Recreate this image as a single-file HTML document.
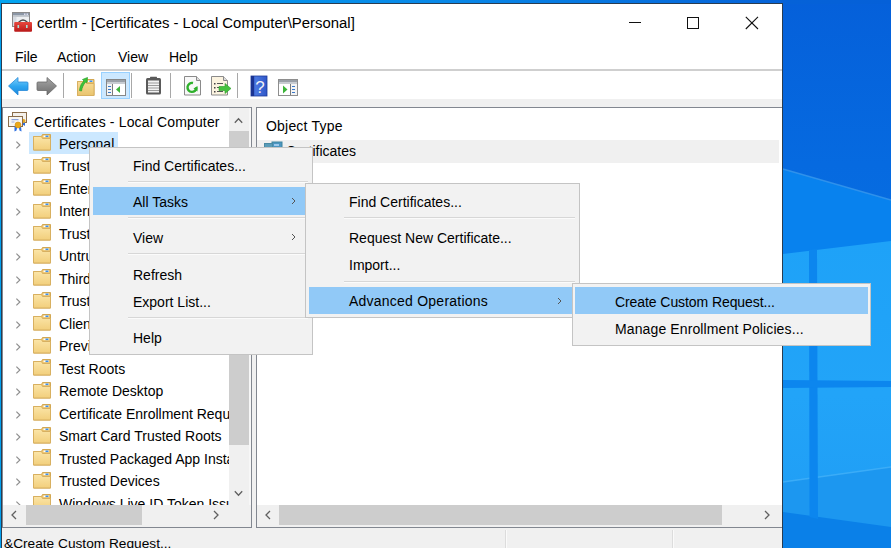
<!DOCTYPE html>
<html><head><meta charset="utf-8">
<style>
html,body{margin:0;padding:0}
body{width:891px;height:548px;overflow:hidden;position:relative;background:#0a6cd8;font-family:"Liberation Sans",sans-serif;}
.a{position:absolute}
.t{position:absolute;font-size:14px;line-height:16px;white-space:nowrap;color:#000}
.win{position:absolute;left:1px;top:3px;width:780px;height:560px;border:1px solid #2a3c50;background:#fff;overflow:hidden}
.menu{position:absolute;background:#f2f2f2;border:1px solid #c4c4c4;}
.hl{position:absolute;background:#91c9f7}
.sep{position:absolute;height:1px;background:#d7d7d7;box-shadow:0 1px 0 #fbfbfb}
.chev{position:absolute}
</style></head><body>
<!-- desktop -->
<svg class="a" style="left:0;top:0" width="891" height="548" viewBox="0 0 891 548">
  <defs>
    <linearGradient id="topg" x1="0" y1="0" x2="1" y2="0">
      <stop offset="0" stop-color="#03a4f0"/>
      <stop offset="0.5" stop-color="#0888e8"/>
      <stop offset="0.88" stop-color="#0562d8"/>
      <stop offset="1" stop-color="#0560d8"/>
    </linearGradient>
    <linearGradient id="rg" x1="0" y1="0" x2="0" y2="1">
      <stop offset="0" stop-color="#0560da"/>
      <stop offset="0.3" stop-color="#066ae0"/>
      <stop offset="1" stop-color="#0a7ae6"/>
    </linearGradient>
    <linearGradient id="pg" x1="0" y1="0" x2="0" y2="1">
      <stop offset="0" stop-color="#1ea2f8"/>
      <stop offset="0.5" stop-color="#22a4f8"/>
      <stop offset="1" stop-color="#1f9cf4"/>
    </linearGradient>
  </defs>
  <rect x="0" y="0" width="891" height="548" fill="url(#rg)"/>
  <rect x="0" y="0" width="891" height="4" fill="url(#topg)"/>
  <rect x="0" y="0" width="1" height="548" fill="#04a0ee"/>
  <polygon points="783,169 891,200 891,548 783,548" fill="#0882ee"/>
  <line x1="783" y1="169" x2="891" y2="200" stroke="#3a98ec" stroke-width="1.5" opacity="0.8"/>
  <polygon points="783,254 891,241 891,548 783,548" fill="url(#pg)"/>
  <polygon points="783,482 891,467 891,548 783,548" fill="#1c97f0"/>
  <line x1="783" y1="482" x2="891" y2="467" stroke="#48b4fa" stroke-width="1.5" opacity="0.7"/>
  <polygon points="783,512 891,527 891,548 783,548" fill="#0a80e8"/>
  <polygon points="809,250 817,249 818,519 809.5,517" fill="#0c86ee"/>
  <polygon points="783,380 891,381 891,387 783,388" fill="#0c86ee"/>
</svg>

<div class="win"></div>
<div class="a" style="left:0;top:0;width:782px;height:548px;overflow:hidden">

<!-- title bar -->
<svg class="a" style="left:12px;top:12px" width="21" height="21" viewBox="0 0 21 21">
  <defs><linearGradient id="tb" x1="0" y1="0" x2="0" y2="1"><stop offset="0" stop-color="#e8483e"/><stop offset="1" stop-color="#b81818"/></linearGradient></defs>
  <rect x="0.5" y="0.5" width="17" height="14" fill="#eef0f2" stroke="#8a8a8a"/>
  <rect x="1" y="1" width="16" height="2.5" fill="#8c97a6"/>
  <rect x="12" y="1.5" width="1.5" height="1.5" fill="#dde"/><rect x="14.5" y="1.5" width="1.5" height="1.5" fill="#dde"/>
  <rect x="1" y="4" width="16" height="1" fill="#c4c8ce"/>
  <rect x="1" y="5" width="3.5" height="9" fill="#d6dbe2"/>
  <path d="M6.5,10.5 Q11,5.5 15.5,10.5" fill="none" stroke="#4a4a4a" stroke-width="1.4"/>
  <rect x="2.2" y="10" width="17.8" height="9.8" rx="1" fill="url(#tb)"/>
  <rect x="5.5" y="13" width="1.6" height="3" fill="#a8e0d8"/>
  <rect x="14" y="13" width="1.6" height="3" fill="#a8e0d8"/>
</svg>
<div class="t" style="left:37px;top:15px;font-size:14.9px">certlm - [Certificates - Local Computer\Personal]</div>
<!-- caption buttons -->
<div class="a" style="left:629px;top:22px;width:12px;height:1px;background:#111"></div>
<div class="a" style="left:687px;top:17px;width:10px;height:10px;border:1px solid #111"></div>
<svg class="a" style="left:745px;top:16px" width="14" height="14" viewBox="0 0 14 14"><path d="M0.8 0.8 L13 13 M13 0.8 L0.8 13" stroke="#111" stroke-width="1.1"/></svg>

<!-- menu bar -->
<div class="t" style="left:15px;top:49px">File</div>
<div class="t" style="left:57px;top:49px">Action</div>
<div class="t" style="left:118px;top:49px">View</div>
<div class="t" style="left:169px;top:49px">Help</div>
<div class="a" style="left:2px;top:69px;width:780px;height:2px;background:#cfcfcf"></div>

<!-- toolbar -->
<div class="a" style="left:101px;top:72px;width:27px;height:25px;background:#cce8ff;border:1px solid #99d1ff"></div>
<svg class="a" style="left:0;top:70px" width="310" height="30" viewBox="0 70 310 30">
  <defs>
    <linearGradient id="bl" x1="0" y1="0" x2="0" y2="1"><stop offset="0" stop-color="#7fd0fa"/><stop offset="0.5" stop-color="#2fa6f0"/><stop offset="1" stop-color="#1a86dc"/></linearGradient>
    <linearGradient id="gr" x1="0" y1="0" x2="0" y2="1"><stop offset="0" stop-color="#a8a8a8"/><stop offset="0.5" stop-color="#8a8a8a"/><stop offset="1" stop-color="#6e6e6e"/></linearGradient>
    <linearGradient id="fold" x1="0" y1="0" x2="0" y2="1"><stop offset="0" stop-color="#f8dc98"/><stop offset="1" stop-color="#e9c46e"/></linearGradient>
    <linearGradient id="hb" x1="0" y1="0" x2="1" y2="0"><stop offset="0" stop-color="#1f3fae"/><stop offset="0.3" stop-color="#4a78e0"/><stop offset="1" stop-color="#2f56c8"/></linearGradient>
  </defs>
  <!-- back -->
  <path d="M8.5,86 L18,77.5 L18,82 L27,82 Q28,82 28,83 L28,89.5 Q28,90.5 27,90.5 L18,90.5 L18,95 Z" fill="url(#bl)" stroke="#2589d8" stroke-width="0.8"/>
  <!-- forward -->
  <path d="M56.5,86 L47,77.5 L47,82 L38,82 Q37,82 37,83 L37,89.5 Q37,90.5 38,90.5 L47,90.5 L47,95 Z" fill="url(#gr)" stroke="#6a6a6a" stroke-width="0.8"/>
  <rect x="63" y="73" width="1" height="25" fill="#a8a8a8"/>
  <!-- up folder -->
  <path d="M77.5,81.5 L85.5,81.5 L86.5,79.5 L94,79.5 L94,95.5 L77.5,95.5 Z" fill="#eec46c" stroke="#d2a752"/>
  <rect x="88" y="80.5" width="5" height="1.5" fill="#fff"/><rect x="89.5" y="80.5" width="3" height="1.5" fill="#3f8fe8"/>
  <path d="M77.5,81.5 L85.5,81.5 L86.5,83.5 L94,83.5 L94,95.5 L77.5,95.5 Z" fill="url(#fold)" stroke="#d8b060"/>
  <path d="M79.5,90.5 C80,86 81.5,83 84,81 L82.5,79.5 L87.5,77.5 L87,82.5 L85.5,82 C83.5,84.5 82,87.5 81.5,91 Z" fill="#3cc43a" stroke="#28a028" stroke-width="0.7"/>
  <!-- console tree icon -->
  <rect x="106.5" y="79.5" width="19" height="16" fill="#f4f4f4" stroke="#868686"/>
  <rect x="107" y="80" width="18" height="2" fill="#9aa0a8"/>
  <rect x="107" y="82" width="18" height="2" fill="#c8ccd2"/>
  <rect x="112" y="84" width="1" height="11" fill="#7a7a7a"/>
  <rect x="108" y="86" width="3" height="1" fill="#3a78c8"/>
  <rect x="108" y="89" width="3" height="1" fill="#3a78c8"/>
  <rect x="108" y="92" width="3" height="1" fill="#3a78c8"/>
  <rect x="113" y="84" width="12" height="11" fill="#fff"/>
  <path d="M116,89.5 L120,86 L120,93 Z" fill="#3cb43a"/>
  <rect x="131" y="73" width="1" height="25" fill="#a8a8a8"/>
  <!-- clipboard -->
  <rect x="146" y="78" width="15" height="16.5" rx="1.5" fill="#5a5a5a"/>
  <rect x="148" y="80.5" width="11" height="12" fill="#f2f2f2"/>
  <rect x="148" y="82.5" width="11" height="1" fill="#9a9a9a"/>
  <rect x="148" y="85" width="11" height="1" fill="#9a9a9a"/>
  <rect x="148" y="87.5" width="11" height="1" fill="#9a9a9a"/>
  <rect x="148" y="90" width="11" height="1" fill="#9a9a9a"/>
  <rect x="150" y="76.7" width="7" height="2.5" rx="0.5" fill="#5a5a5a"/>
  <rect x="170" y="73" width="1" height="25" fill="#a8a8a8"/>
  <!-- refresh doc -->
  <path d="M184.5,76.5 L196.5,76.5 L200.5,80.5 L200.5,95 L184.5,95 Z" fill="#f8f8f8" stroke="#8a8a8a"/>
  <path d="M196.5,76.5 L196.5,80.5 L200.5,80.5" fill="#ddd" stroke="#8a8a8a"/>
  <path d="M196.5,87.5 A4.5,4.5 0 1 1 193,83" fill="none" stroke="#2fb02c" stroke-width="2.4"/>
  <path d="M197.5,91.5 L197.5,86 L193.5,88.5 Z" fill="#2fb02c"/>
  <!-- export list -->
  <path d="M211.5,76.5 L223.5,76.5 L227.5,80.5 L227.5,95 L211.5,95 Z" fill="#fbf3e0" stroke="#8a8a8a"/>
  <path d="M223.5,76.5 L223.5,80.5 L227.5,80.5" fill="#ddd" stroke="#8a8a8a"/>
  <rect x="214" y="83" width="1.5" height="1.5" fill="#444"/><rect x="217" y="83" width="6" height="1" fill="#555"/>
  <rect x="214" y="87" width="1.5" height="1.5" fill="#444"/><rect x="217" y="87" width="6" height="1" fill="#555"/>
  <rect x="214" y="91" width="1.5" height="1.5" fill="#444"/><rect x="217" y="91" width="6" height="1" fill="#555"/>
  <path d="M219,86.5 L225,86.5 L225,83.5 L231,88.5 L225,93.5 L225,90.5 L219,90.5 Z" fill="#45c23f" stroke="#2a9a28" stroke-width="0.6"/>
  <rect x="237" y="73" width="1" height="25" fill="#a8a8a8"/>
  <!-- help -->
  <rect x="251" y="76" width="16" height="20" fill="url(#hb)" stroke="#1d3a9a" stroke-width="0.8"/>
  <rect x="251" y="76" width="3" height="20" fill="#1b3492"/>
  <text x="260" y="93" font-family="Liberation Sans" font-size="17" fill="#f0f0f4" text-anchor="middle">?</text>
  <!-- action pane icon -->
  <rect x="278.5" y="79.5" width="19" height="16" fill="#f4f4f4" stroke="#8e8e8e"/>
  <rect x="279" y="80" width="18" height="2" fill="#9aa0a8"/>
  <rect x="279" y="82" width="18" height="2" fill="#c8ccd2"/>
  <rect x="290" y="84" width="1" height="11" fill="#7a7a7a"/>
  <rect x="279" y="84" width="11" height="11" fill="#fff"/>
  <path d="M283,85.5 L287.5,89.5 L283,93.5 Z" fill="#3cb43a"/>
  <rect x="292" y="86" width="3" height="1" fill="#3a78c8"/>
  <rect x="292" y="89" width="3" height="1" fill="#3a78c8"/>
  <rect x="292" y="92" width="3" height="1" fill="#3a78c8"/>
</svg>
<!-- toolbar bottom gray -->
<div class="a" style="left:2px;top:99px;width:780px;height:8px;background:#f0f0f0"></div>

<!-- left pane -->
<div class="a" style="left:2px;top:107px;width:248px;height:419px;border:1px solid #828790;background:#fff;overflow:hidden"></div>
<!-- gap between panes -->
<div class="a" style="left:252px;top:107px;width:4px;height:421px;background:#f0f0f0"></div>
<!-- right pane -->
<div class="a" style="left:256px;top:107px;width:530px;height:419px;border:1px solid #828790;background:#fff;overflow:hidden"></div>
<!-- tree content -->
<div class="a" style="left:3px;top:108px;width:226px;height:397px;overflow:hidden">
<div class="a" style="left:26px;top:24px;width:89px;height:22px;background:#cce8ff"></div>
<svg class="a" style="left:5px;top:3px" width="22" height="21" viewBox="0 0 22 21">
  <rect x="4.5" y="1.5" width="14" height="10" fill="#f4f0ea" stroke="#8b6d4a"/>
  <path d="M14,10 L14,15 L15.5,14 L17,15 L17,10 Z" fill="#2d6fe0"/>
  <circle cx="15.5" cy="10" r="2" fill="#e8a820"/>
  <rect x="0.5" y="5.5" width="14" height="10" fill="#f8f6f2" stroke="#8b6d4a"/>
  <rect x="3.5" y="8" width="7" height="1.2" fill="#8aa0d8"/>
  <rect x="3.5" y="10.5" width="3" height="1" fill="#a0b0dc"/>
  <path d="M6.5,15 L6.5,20.5 L8.5,19.5 L9.5,15 Z" fill="#2d6fe0"/>
  <path d="M10.5,15 L11.5,19.5 L13.5,20.5 L13,15 Z" fill="#2d6fe0"/>
  <circle cx="10" cy="14" r="3" fill="#eaa818" stroke="#d08a10" stroke-width="0.6"/>
</svg>
<div class="t" style="left:31px;top:6px;letter-spacing:0.15px">Certificates - Local Computer</div>
<svg class="a" style="left:12px;top:33px" width="7" height="8" viewBox="0 0 7 8"><path d="M1.4,0.6 L4.9,4 L1.4,7.4" fill="none" stroke="#8e8e8e" stroke-width="1.15"/></svg>
<svg class="a" style="left:30px;top:26px" width="18" height="17" viewBox="0 0 18 17"><path d="M0.5,2.5 L8.5,2.5 L9.5,0.5 L17.5,0.5 L17.5,16 L0.5,16 Z" fill="#eec46c" stroke="#d2a752"/><rect x="10.5" y="1.5" width="5.5" height="1.6" fill="#fff"/><rect x="12.5" y="1.5" width="3" height="1.6" fill="#3f8fe8"/><path d="M0.5,2.5 L8.5,2.5 L9.5,4.5 L17.5,4.5 L17.5,16 L0.5,16 Z" fill="url(#fold2)" stroke="#d8b060"/></svg>
<div class="t" style="left:56px;top:28px">Personal</div>
<svg class="a" style="left:12px;top:55px" width="7" height="8" viewBox="0 0 7 8"><path d="M1.4,0.6 L4.9,4 L1.4,7.4" fill="none" stroke="#8e8e8e" stroke-width="1.15"/></svg>
<svg class="a" style="left:30px;top:49px" width="18" height="17" viewBox="0 0 18 17"><path d="M0.5,2.5 L8.5,2.5 L9.5,0.5 L17.5,0.5 L17.5,16 L0.5,16 Z" fill="#eec46c" stroke="#d2a752"/><rect x="10.5" y="1.5" width="5.5" height="1.6" fill="#fff"/><rect x="12.5" y="1.5" width="3" height="1.6" fill="#3f8fe8"/><path d="M0.5,2.5 L8.5,2.5 L9.5,4.5 L17.5,4.5 L17.5,16 L0.5,16 Z" fill="url(#fold2)" stroke="#d8b060"/></svg>
<div class="t" style="left:56px;top:50px">Trusted Root Certification Authorities</div>
<svg class="a" style="left:12px;top:78px" width="7" height="8" viewBox="0 0 7 8"><path d="M1.4,0.6 L4.9,4 L1.4,7.4" fill="none" stroke="#8e8e8e" stroke-width="1.15"/></svg>
<svg class="a" style="left:30px;top:71px" width="18" height="17" viewBox="0 0 18 17"><path d="M0.5,2.5 L8.5,2.5 L9.5,0.5 L17.5,0.5 L17.5,16 L0.5,16 Z" fill="#eec46c" stroke="#d2a752"/><rect x="10.5" y="1.5" width="5.5" height="1.6" fill="#fff"/><rect x="12.5" y="1.5" width="3" height="1.6" fill="#3f8fe8"/><path d="M0.5,2.5 L8.5,2.5 L9.5,4.5 L17.5,4.5 L17.5,16 L0.5,16 Z" fill="url(#fold2)" stroke="#d8b060"/></svg>
<div class="t" style="left:56px;top:73px">Enterprise Trust</div>
<svg class="a" style="left:12px;top:100px" width="7" height="8" viewBox="0 0 7 8"><path d="M1.4,0.6 L4.9,4 L1.4,7.4" fill="none" stroke="#8e8e8e" stroke-width="1.15"/></svg>
<svg class="a" style="left:30px;top:94px" width="18" height="17" viewBox="0 0 18 17"><path d="M0.5,2.5 L8.5,2.5 L9.5,0.5 L17.5,0.5 L17.5,16 L0.5,16 Z" fill="#eec46c" stroke="#d2a752"/><rect x="10.5" y="1.5" width="5.5" height="1.6" fill="#fff"/><rect x="12.5" y="1.5" width="3" height="1.6" fill="#3f8fe8"/><path d="M0.5,2.5 L8.5,2.5 L9.5,4.5 L17.5,4.5 L17.5,16 L0.5,16 Z" fill="url(#fold2)" stroke="#d8b060"/></svg>
<div class="t" style="left:56px;top:95px">Intermediate Certification Authorities</div>
<svg class="a" style="left:12px;top:123px" width="7" height="8" viewBox="0 0 7 8"><path d="M1.4,0.6 L4.9,4 L1.4,7.4" fill="none" stroke="#8e8e8e" stroke-width="1.15"/></svg>
<svg class="a" style="left:30px;top:116px" width="18" height="17" viewBox="0 0 18 17"><path d="M0.5,2.5 L8.5,2.5 L9.5,0.5 L17.5,0.5 L17.5,16 L0.5,16 Z" fill="#eec46c" stroke="#d2a752"/><rect x="10.5" y="1.5" width="5.5" height="1.6" fill="#fff"/><rect x="12.5" y="1.5" width="3" height="1.6" fill="#3f8fe8"/><path d="M0.5,2.5 L8.5,2.5 L9.5,4.5 L17.5,4.5 L17.5,16 L0.5,16 Z" fill="url(#fold2)" stroke="#d8b060"/></svg>
<div class="t" style="left:56px;top:118px">Trusted Publishers</div>
<svg class="a" style="left:12px;top:145px" width="7" height="8" viewBox="0 0 7 8"><path d="M1.4,0.6 L4.9,4 L1.4,7.4" fill="none" stroke="#8e8e8e" stroke-width="1.15"/></svg>
<svg class="a" style="left:30px;top:139px" width="18" height="17" viewBox="0 0 18 17"><path d="M0.5,2.5 L8.5,2.5 L9.5,0.5 L17.5,0.5 L17.5,16 L0.5,16 Z" fill="#eec46c" stroke="#d2a752"/><rect x="10.5" y="1.5" width="5.5" height="1.6" fill="#fff"/><rect x="12.5" y="1.5" width="3" height="1.6" fill="#3f8fe8"/><path d="M0.5,2.5 L8.5,2.5 L9.5,4.5 L17.5,4.5 L17.5,16 L0.5,16 Z" fill="url(#fold2)" stroke="#d8b060"/></svg>
<div class="t" style="left:56px;top:140px">Untrusted Certificates</div>
<svg class="a" style="left:12px;top:168px" width="7" height="8" viewBox="0 0 7 8"><path d="M1.4,0.6 L4.9,4 L1.4,7.4" fill="none" stroke="#8e8e8e" stroke-width="1.15"/></svg>
<svg class="a" style="left:30px;top:161px" width="18" height="17" viewBox="0 0 18 17"><path d="M0.5,2.5 L8.5,2.5 L9.5,0.5 L17.5,0.5 L17.5,16 L0.5,16 Z" fill="#eec46c" stroke="#d2a752"/><rect x="10.5" y="1.5" width="5.5" height="1.6" fill="#fff"/><rect x="12.5" y="1.5" width="3" height="1.6" fill="#3f8fe8"/><path d="M0.5,2.5 L8.5,2.5 L9.5,4.5 L17.5,4.5 L17.5,16 L0.5,16 Z" fill="url(#fold2)" stroke="#d8b060"/></svg>
<div class="t" style="left:56px;top:163px">Third-Party Root Certification Authorities</div>
<svg class="a" style="left:12px;top:190px" width="7" height="8" viewBox="0 0 7 8"><path d="M1.4,0.6 L4.9,4 L1.4,7.4" fill="none" stroke="#8e8e8e" stroke-width="1.15"/></svg>
<svg class="a" style="left:30px;top:184px" width="18" height="17" viewBox="0 0 18 17"><path d="M0.5,2.5 L8.5,2.5 L9.5,0.5 L17.5,0.5 L17.5,16 L0.5,16 Z" fill="#eec46c" stroke="#d2a752"/><rect x="10.5" y="1.5" width="5.5" height="1.6" fill="#fff"/><rect x="12.5" y="1.5" width="3" height="1.6" fill="#3f8fe8"/><path d="M0.5,2.5 L8.5,2.5 L9.5,4.5 L17.5,4.5 L17.5,16 L0.5,16 Z" fill="url(#fold2)" stroke="#d8b060"/></svg>
<div class="t" style="left:56px;top:185px">Trusted People</div>
<svg class="a" style="left:12px;top:213px" width="7" height="8" viewBox="0 0 7 8"><path d="M1.4,0.6 L4.9,4 L1.4,7.4" fill="none" stroke="#8e8e8e" stroke-width="1.15"/></svg>
<svg class="a" style="left:30px;top:206px" width="18" height="17" viewBox="0 0 18 17"><path d="M0.5,2.5 L8.5,2.5 L9.5,0.5 L17.5,0.5 L17.5,16 L0.5,16 Z" fill="#eec46c" stroke="#d2a752"/><rect x="10.5" y="1.5" width="5.5" height="1.6" fill="#fff"/><rect x="12.5" y="1.5" width="3" height="1.6" fill="#3f8fe8"/><path d="M0.5,2.5 L8.5,2.5 L9.5,4.5 L17.5,4.5 L17.5,16 L0.5,16 Z" fill="url(#fold2)" stroke="#d8b060"/></svg>
<div class="t" style="left:56px;top:208px">Client Authentication Issuers</div>
<svg class="a" style="left:12px;top:235px" width="7" height="8" viewBox="0 0 7 8"><path d="M1.4,0.6 L4.9,4 L1.4,7.4" fill="none" stroke="#8e8e8e" stroke-width="1.15"/></svg>
<svg class="a" style="left:30px;top:229px" width="18" height="17" viewBox="0 0 18 17"><path d="M0.5,2.5 L8.5,2.5 L9.5,0.5 L17.5,0.5 L17.5,16 L0.5,16 Z" fill="#eec46c" stroke="#d2a752"/><rect x="10.5" y="1.5" width="5.5" height="1.6" fill="#fff"/><rect x="12.5" y="1.5" width="3" height="1.6" fill="#3f8fe8"/><path d="M0.5,2.5 L8.5,2.5 L9.5,4.5 L17.5,4.5 L17.5,16 L0.5,16 Z" fill="url(#fold2)" stroke="#d8b060"/></svg>
<div class="t" style="left:56px;top:230px">Preview Build Roots</div>
<svg class="a" style="left:12px;top:258px" width="7" height="8" viewBox="0 0 7 8"><path d="M1.4,0.6 L4.9,4 L1.4,7.4" fill="none" stroke="#8e8e8e" stroke-width="1.15"/></svg>
<svg class="a" style="left:30px;top:251px" width="18" height="17" viewBox="0 0 18 17"><path d="M0.5,2.5 L8.5,2.5 L9.5,0.5 L17.5,0.5 L17.5,16 L0.5,16 Z" fill="#eec46c" stroke="#d2a752"/><rect x="10.5" y="1.5" width="5.5" height="1.6" fill="#fff"/><rect x="12.5" y="1.5" width="3" height="1.6" fill="#3f8fe8"/><path d="M0.5,2.5 L8.5,2.5 L9.5,4.5 L17.5,4.5 L17.5,16 L0.5,16 Z" fill="url(#fold2)" stroke="#d8b060"/></svg>
<div class="t" style="left:56px;top:253px">Test Roots</div>
<svg class="a" style="left:12px;top:280px" width="7" height="8" viewBox="0 0 7 8"><path d="M1.4,0.6 L4.9,4 L1.4,7.4" fill="none" stroke="#8e8e8e" stroke-width="1.15"/></svg>
<svg class="a" style="left:30px;top:274px" width="18" height="17" viewBox="0 0 18 17"><path d="M0.5,2.5 L8.5,2.5 L9.5,0.5 L17.5,0.5 L17.5,16 L0.5,16 Z" fill="#eec46c" stroke="#d2a752"/><rect x="10.5" y="1.5" width="5.5" height="1.6" fill="#fff"/><rect x="12.5" y="1.5" width="3" height="1.6" fill="#3f8fe8"/><path d="M0.5,2.5 L8.5,2.5 L9.5,4.5 L17.5,4.5 L17.5,16 L0.5,16 Z" fill="url(#fold2)" stroke="#d8b060"/></svg>
<div class="t" style="left:56px;top:275px">Remote Desktop</div>
<svg class="a" style="left:12px;top:303px" width="7" height="8" viewBox="0 0 7 8"><path d="M1.4,0.6 L4.9,4 L1.4,7.4" fill="none" stroke="#8e8e8e" stroke-width="1.15"/></svg>
<svg class="a" style="left:30px;top:296px" width="18" height="17" viewBox="0 0 18 17"><path d="M0.5,2.5 L8.5,2.5 L9.5,0.5 L17.5,0.5 L17.5,16 L0.5,16 Z" fill="#eec46c" stroke="#d2a752"/><rect x="10.5" y="1.5" width="5.5" height="1.6" fill="#fff"/><rect x="12.5" y="1.5" width="3" height="1.6" fill="#3f8fe8"/><path d="M0.5,2.5 L8.5,2.5 L9.5,4.5 L17.5,4.5 L17.5,16 L0.5,16 Z" fill="url(#fold2)" stroke="#d8b060"/></svg>
<div class="t" style="left:56px;top:298px">Certificate Enrollment Requests</div>
<svg class="a" style="left:12px;top:325px" width="7" height="8" viewBox="0 0 7 8"><path d="M1.4,0.6 L4.9,4 L1.4,7.4" fill="none" stroke="#8e8e8e" stroke-width="1.15"/></svg>
<svg class="a" style="left:30px;top:319px" width="18" height="17" viewBox="0 0 18 17"><path d="M0.5,2.5 L8.5,2.5 L9.5,0.5 L17.5,0.5 L17.5,16 L0.5,16 Z" fill="#eec46c" stroke="#d2a752"/><rect x="10.5" y="1.5" width="5.5" height="1.6" fill="#fff"/><rect x="12.5" y="1.5" width="3" height="1.6" fill="#3f8fe8"/><path d="M0.5,2.5 L8.5,2.5 L9.5,4.5 L17.5,4.5 L17.5,16 L0.5,16 Z" fill="url(#fold2)" stroke="#d8b060"/></svg>
<div class="t" style="left:56px;top:320px">Smart Card Trusted Roots</div>
<svg class="a" style="left:12px;top:348px" width="7" height="8" viewBox="0 0 7 8"><path d="M1.4,0.6 L4.9,4 L1.4,7.4" fill="none" stroke="#8e8e8e" stroke-width="1.15"/></svg>
<svg class="a" style="left:30px;top:341px" width="18" height="17" viewBox="0 0 18 17"><path d="M0.5,2.5 L8.5,2.5 L9.5,0.5 L17.5,0.5 L17.5,16 L0.5,16 Z" fill="#eec46c" stroke="#d2a752"/><rect x="10.5" y="1.5" width="5.5" height="1.6" fill="#fff"/><rect x="12.5" y="1.5" width="3" height="1.6" fill="#3f8fe8"/><path d="M0.5,2.5 L8.5,2.5 L9.5,4.5 L17.5,4.5 L17.5,16 L0.5,16 Z" fill="url(#fold2)" stroke="#d8b060"/></svg>
<div class="t" style="left:56px;top:343px">Trusted Packaged App Installation Authorities</div>
<svg class="a" style="left:12px;top:370px" width="7" height="8" viewBox="0 0 7 8"><path d="M1.4,0.6 L4.9,4 L1.4,7.4" fill="none" stroke="#8e8e8e" stroke-width="1.15"/></svg>
<svg class="a" style="left:30px;top:364px" width="18" height="17" viewBox="0 0 18 17"><path d="M0.5,2.5 L8.5,2.5 L9.5,0.5 L17.5,0.5 L17.5,16 L0.5,16 Z" fill="#eec46c" stroke="#d2a752"/><rect x="10.5" y="1.5" width="5.5" height="1.6" fill="#fff"/><rect x="12.5" y="1.5" width="3" height="1.6" fill="#3f8fe8"/><path d="M0.5,2.5 L8.5,2.5 L9.5,4.5 L17.5,4.5 L17.5,16 L0.5,16 Z" fill="url(#fold2)" stroke="#d8b060"/></svg>
<div class="t" style="left:56px;top:365px">Trusted Devices</div>
<svg class="a" style="left:12px;top:393px" width="7" height="8" viewBox="0 0 7 8"><path d="M1.4,0.6 L4.9,4 L1.4,7.4" fill="none" stroke="#8e8e8e" stroke-width="1.15"/></svg>
<svg class="a" style="left:30px;top:386px" width="18" height="17" viewBox="0 0 18 17"><path d="M0.5,2.5 L8.5,2.5 L9.5,0.5 L17.5,0.5 L17.5,16 L0.5,16 Z" fill="#eec46c" stroke="#d2a752"/><rect x="10.5" y="1.5" width="5.5" height="1.6" fill="#fff"/><rect x="12.5" y="1.5" width="3" height="1.6" fill="#3f8fe8"/><path d="M0.5,2.5 L8.5,2.5 L9.5,4.5 L17.5,4.5 L17.5,16 L0.5,16 Z" fill="url(#fold2)" stroke="#d8b060"/></svg>
<div class="t" style="left:56px;top:388px">Windows Live ID Token Issuer</div>
</div>
<svg width="0" height="0" style="position:absolute"><defs><linearGradient id="fold2" x1="0" y1="0" x2="0" y2="1"><stop offset="0" stop-color="#fbe5a8"/><stop offset="1" stop-color="#f2cf7c"/></linearGradient>
</defs></svg>
<!-- left v scrollbar -->
<div class="a" style="left:229px;top:108px;width:22px;height:397px;background:#f0f0f0"></div>
<div class="a" style="left:229px;top:131px;width:20px;height:314px;background:#cdcdcd"></div>
<div class="a" style="left:249px;top:108px;width:2px;height:397px;background:#f7f7f7"></div>
<svg class="a" style="left:234px;top:117px" width="9" height="7" viewBox="0 0 9 7"><path d="M0.8,5.8 L4.5,1.8 L8.2,5.8" fill="none" stroke="#606060" stroke-width="1.3"/></svg>
<svg class="a" style="left:234px;top:490px" width="9" height="7" viewBox="0 0 9 7"><path d="M0.8,1.2 L4.5,5.2 L8.2,1.2" fill="none" stroke="#606060" stroke-width="1.3"/></svg>
<!-- left h scrollbar -->
<div class="a" style="left:3px;top:505px;width:248px;height:22px;background:#f0f0f0"></div>
<div class="a" style="left:26px;top:505px;width:116px;height:20px;background:#cdcdcd"></div>
<svg class="a" style="left:10px;top:510px" width="8" height="10" viewBox="0 0 8 10"><path d="M6,1 L2,5 L6,9" fill="none" stroke="#606060" stroke-width="1.3"/></svg>
<svg class="a" style="left:212px;top:510px" width="8" height="10" viewBox="0 0 8 10"><path d="M2,1 L6,5 L2,9" fill="none" stroke="#606060" stroke-width="1.3"/></svg>
<!-- right pane content -->
<div class="t" style="left:266px;top:118px;letter-spacing:0.2px">Object Type</div>
<div class="a" style="left:257px;top:140px;width:522px;height:23px;background:#f0f0f0"></div>
<svg class="a" style="left:264px;top:141px" width="20" height="17" viewBox="0 0 20 17">
  <rect x="8" y="1" width="10" height="12" fill="#4d96c0" stroke="#3f849f"/>
  <rect x="10" y="3" width="5" height="2" fill="#9cc8ec"/>
  <rect x="0.5" y="2.5" width="8" height="11" fill="#5a9cb8" stroke="#4a8aa4"/>
</svg>
<div class="t" style="left:286px;top:143px">Certificates</div>
<!-- right h scrollbar -->
<div class="a" style="left:257px;top:505px;width:525px;height:22px;background:#f0f0f0"></div>
<div class="a" style="left:279px;top:505px;width:443px;height:20px;background:#cdcdcd"></div>
<svg class="a" style="left:264px;top:510px" width="8" height="10" viewBox="0 0 8 10"><path d="M6,1 L2,5 L6,9" fill="none" stroke="#606060" stroke-width="1.3"/></svg>
<svg class="a" style="left:763px;top:510px" width="8" height="10" viewBox="0 0 8 10"><path d="M2,1 L6,5 L2,9" fill="none" stroke="#606060" stroke-width="1.3"/></svg>
<!-- status bar -->
<div class="a" style="left:2px;top:528px;width:780px;height:20px;background:#f0f0f0"></div>
<div class="t" style="left:4px;top:536px;font-size:13.7px">&amp;Create Custom Request...</div>
<div class="a" style="left:505px;top:530px;width:1px;height:18px;background:#dcdcdc"></div><div class="a" style="left:506px;top:530px;width:1px;height:18px;background:#fafafa"></div>
<div class="a" style="left:672px;top:530px;width:1px;height:18px;background:#dcdcdc"></div><div class="a" style="left:673px;top:530px;width:1px;height:18px;background:#fafafa"></div>
</div>
<!-- window right border overlay -->
<div class="a" style="left:782px;top:3px;width:1px;height:545px;background:#2a3c50"></div>

<!-- context menus -->
<div class="menu" style="left:89px;top:147px;width:224px;height:208px;box-sizing:border-box"></div>
<div class="hl" style="left:93px;top:187px;width:215px;height:28px"></div>
<div class="sep" style="left:128px;top:181px;width:180px"></div>
<div class="sep" style="left:128px;top:217px;width:180px"></div>
<div class="sep" style="left:128px;top:253px;width:180px"></div>
<div class="sep" style="left:128px;top:317px;width:180px"></div>
<div class="t" style="left:133px;top:158px">Find Certificates...</div>
<div class="t" style="left:133px;top:194px">All Tasks</div>
<svg class="a" style="left:291px;top:197px" width="5" height="8" viewBox="0 0 5 8"><path d="M1,1 L4,4 L1,7" fill="none" stroke="#555" stroke-width="1"/></svg>
<div class="t" style="left:133px;top:230px">View</div>
<svg class="a" style="left:291px;top:233px" width="5" height="8" viewBox="0 0 5 8"><path d="M1,1 L4,4 L1,7" fill="none" stroke="#555" stroke-width="1"/></svg>
<div class="t" style="left:133px;top:267px">Refresh</div>
<div class="t" style="left:133px;top:294px">Export List...</div>
<div class="t" style="left:133px;top:330px">Help</div>

<div class="menu" style="left:305px;top:183px;width:275px;height:135px;box-sizing:border-box"></div>
<div class="hl" style="left:309px;top:287px;width:266px;height:27px"></div>
<div class="sep" style="left:344px;top:217px;width:231px"></div>
<div class="sep" style="left:344px;top:281px;width:231px"></div>
<div class="t" style="left:349px;top:194px">Find Certificates...</div>
<div class="t" style="left:349px;top:230px">Request New Certificate...</div>
<div class="t" style="left:349px;top:257px">Import...</div>
<div class="t" style="left:349px;top:293px;letter-spacing:0.23px">Advanced Operations</div>
<svg class="a" style="left:557px;top:297px" width="5" height="8" viewBox="0 0 5 8"><path d="M1,1 L4,4 L1,7" fill="none" stroke="#555" stroke-width="1"/></svg>

<div class="menu" style="left:572px;top:283px;width:299px;height:63px;box-sizing:border-box"></div>
<div class="hl" style="left:575px;top:287px;width:293px;height:27px"></div>
<div class="t" style="left:615px;top:294px;letter-spacing:-0.08px">Create Custom Request...</div>
<div class="t" style="left:615px;top:321px;letter-spacing:0.12px">Manage Enrollment Policies...</div>
</body></html>
